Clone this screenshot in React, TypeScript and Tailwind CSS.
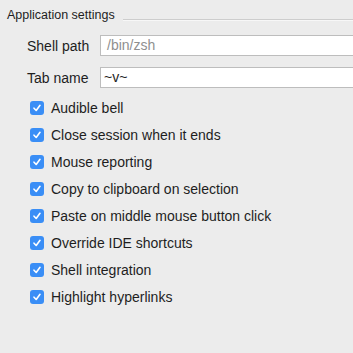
import React from "react";

const items = [
  "Audible bell",
  "Close session when it ends",
  "Mouse reporting",
  "Copy to clipboard on selection",
  "Paste on middle mouse button click",
  "Override IDE shortcuts",
  "Shell integration",
  "Highlight hyperlinks",
];

function Check() {
  return (
    <div className="w-[14px] h-[14px] rounded-[3px] bg-[#3a8ef6] flex items-center justify-center shrink-0">
      <svg width="10" height="10" viewBox="0 0 10 10">
        <path d="M2 5.2 L4.2 7.5 L8 2.3" fill="none" stroke="white" strokeWidth="1.6" strokeLinecap="round" strokeLinejoin="round" />
      </svg>
    </div>
  );
}

export default function App() {
  return (
    <div
      className="w-[353px] h-[353px] bg-[#ececec] overflow-hidden text-[14px] text-[#1e1e1e]"
      style={{ fontFamily: '"Liberation Sans", Arial, sans-serif' }}
    >
      <div className="flex h-[23px] pt-[7px]">
        <span className="pl-[7px] leading-[16px] text-[12.5px]">Application settings</span>
        <div className="flex-1 ml-[8px] mt-[12px] h-[2px] border-t border-b border-t-[#cdcdcd] border-b-[#f7f7f7]" />
      </div>
      <div className="flex items-center mt-[12px] h-[21px]">
        <span className="pl-[27px] w-[100px] leading-[16px]">Shell path</span>
        <div className="flex-1 h-[21px] bg-white border border-[#bdbdbd] border-r-0 flex items-center pl-[6px] text-[#8f8f8f]">
          /bin/zsh
        </div>
      </div>
      <div className="flex items-center mt-[11px] h-[21px]">
        <span className="pl-[27px] w-[100px] leading-[16px]">Tab name</span>
        <div className="flex-1 h-[21px] bg-white border border-[#bdbdbd] border-r-0 flex items-center pl-[3px]">
          ~v~
        </div>
      </div>
      <div className="flex flex-col mt-[6px]">
        {items.map((t) => (
          <div key={t} className="flex items-center h-[27px] pl-[30px] gap-[7px]">
            <Check />
            <span className="leading-[16px]">{t}</span>
          </div>
        ))}
      </div>
    </div>
  );
}
